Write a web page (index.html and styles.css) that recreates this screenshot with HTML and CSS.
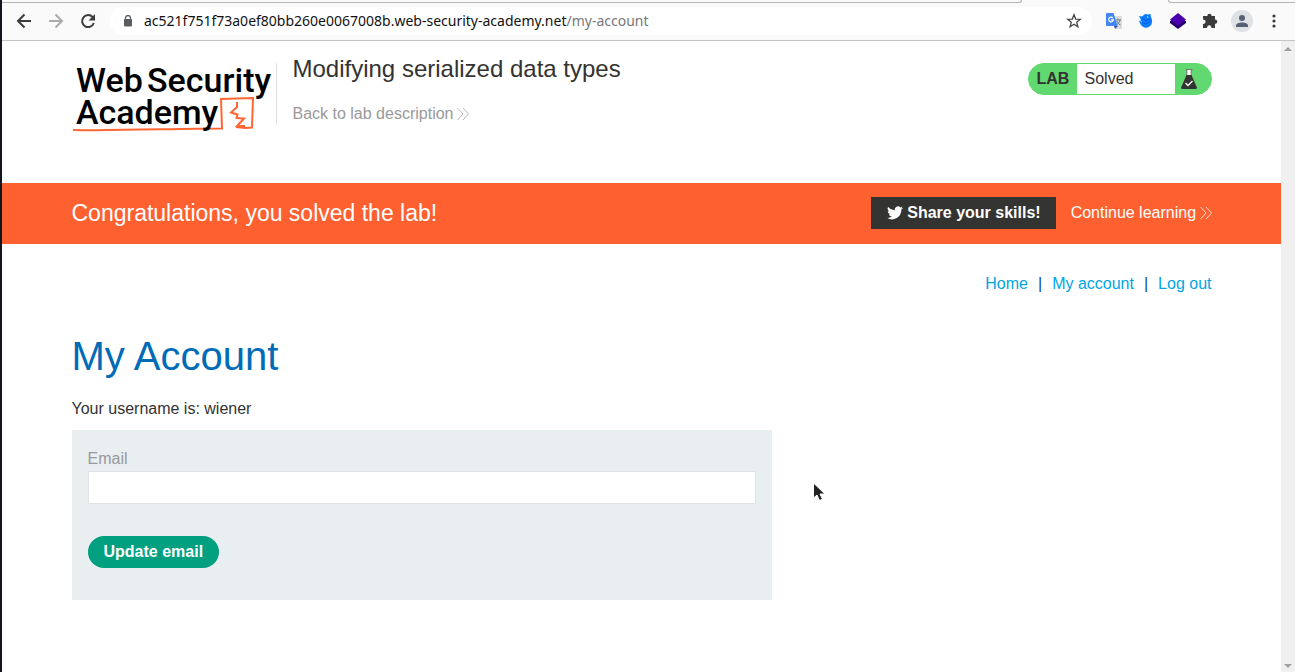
FILE: index.html
```html
<!DOCTYPE html>
<html lang="en">
<head>
<meta charset="utf-8">
<title>Modifying serialized data types</title>
<link rel="stylesheet" href="styles.css">
</head>
<body>
<div class="browser">
  <div class="tabs"><span class="tab-edge tab-edge-left"></span><span class="tab-edge tab-edge-right"></span></div>
  <div class="toolbar">
    <button class="tool" aria-label="Back"><svg width="16" height="16" viewBox="0 0 16 16" fill="none" stroke="#3c3c3c" stroke-width="2"><path d="M15 8H2M8.500 1.500L2 8l6.500 6.500"/></svg></button>
    <button class="tool" aria-label="Forward"><svg width="16" height="16" viewBox="0 0 16 16" fill="none" stroke="#ababab" stroke-width="2"><path d="M1 8h13M7.500 1.500L14 8l-6.500 6.500"/></svg></button>
    <button class="tool" aria-label="Reload"><svg width="16" height="16" viewBox="0 0 16 16"><path d="M12.700 4.200A6 6 0 1 0 13.800 10" fill="none" stroke="#3c3c3c" stroke-width="2"/><path d="M15 1v6.500H8.500z" fill="#3c3c3c"/></svg></button>
    <div class="address">
      <svg width="10" height="12" viewBox="0 0 10 12"><path d="M2.500 5V3a2.500 2.500 0 0 1 5 0v2" fill="none" stroke="#5a5e63" stroke-width="1.300"/><rect x="1" y="4" width="8" height="7.500" rx="1" fill="#5a5e63"/></svg>
      <span class="url">ac521f751f73a0ef80bb260e0067008b.web-security-academy.net<span class="path">/my-account</span></span>
      <button class="star" aria-label="Bookmark"><svg width="16" height="16" viewBox="0 0 16 16"><path d="M8 1.800l1.700 4.300 4.600.3-3.600 2.900 1.200 4.500L8 11.300l-3.900 2.500 1.200-4.500-3.600-2.900 4.600-.3z" fill="none" stroke="#444" stroke-width="1.300"/></svg></button>
    </div>
    <div class="extensions">
      <button class="tool" aria-label="Translate"><svg width="16" height="16" viewBox="0 0 16 16"><path d="M6 3h9a1 1 0 0 1 1 1v12H9z" fill="#dcdcdc"/><path d="M9.500 7h5.500M12 5.500V7M14 7c-.5 2.500-2 4-4 5M10.500 8c1 2 2 3 4 4" fill="none" stroke="#607d8b" stroke-width="1"/><path d="M8 13h4l-3 3z" fill="#3450c5"/><path d="M1 0h6.500L11.500 13H1a1 1 0 0 1-1-1V1a1 1 0 0 1 1-1z" fill="#4285f4"/><path d="M6.800 5A2.300 2.300 0 1 0 7.300 6.800H5" fill="none" stroke="#fff" stroke-width="1.200"/></svg></button>
      <button class="tool" aria-label="Proxy"><svg width="16" height="16" viewBox="0 0 16 16"><path d="M1 3l3 .5L7 1l3 .5L12.500 1l.5 3 1 3a6 6 0 0 1-12 3L1 8.500 3 7z" fill="#0a7cff"/><path d="M4 5.500l4 2 4-1.500M4.500 9c1.500 2.500 5.500 2.500 7-.5" fill="none" stroke="#0758d8"/><path d="M2.500 8l1.500 1M9.500 3l.5 2" stroke="#9bd0ff"/></svg></button>
      <button class="tool" aria-label="Layers"><svg width="16" height="16" viewBox="0 0 16 16"><path d="M0 8l8-3 8 3v2l-8 6-8-6z" fill="#21006b"/><path d="M8 0l8 6.500L8 13 0 6.500z" fill="#4b00b0"/></svg></button>
      <button class="tool" aria-label="Extensions"><svg width="16" height="16" viewBox="0 0 16 16"><path d="M1 3h4.500C4.800 0 10.200 0 9.500 3H13v3.600c3 0 3 4.300 0 4.300V15H9.500c0-3.600-4.500-3.600-4.500 0H1v-4c3.500 0 3.500-4.500 0-4.500z" fill="#3c3c3c"/></svg></button>
      <button class="avatar" aria-label="Profile"><svg width="14" height="14" viewBox="0 0 14 14" fill="#566174"><circle cx="7" cy="4" r="3"/><path d="M1 13v-1.500C1 7.500 13 7.500 13 11.500V13z"/></svg></button>
      <button class="tool" aria-label="Menu"><svg width="16" height="16" viewBox="0 0 16 16" fill="#3c3c3c"><circle cx="8" cy="3" r="1.600"/><circle cx="8" cy="8" r="1.600"/><circle cx="8" cy="13" r="1.600"/></svg></button>
    </div>
  </div>
  <div class="viewport">
    <div class="page">
      <header class="container lab-header">
        <a class="logo" href="#" aria-label="Web Security Academy">
          <svg width="204" height="76" viewBox="0 0 204 76">
            <path d="M1 73c50 1 100-1.500 149-1.500l-1-29.500 32-1-1 29.500-7 .5-9-1" fill="none" stroke="#ff6633" stroke-width="2"/>
            <path d="M165 45v5l-6 5.500 6.500 2-1 3.500 7.500.5-7 7.500h8" fill="none" stroke="#ff6633" stroke-width="2"/>
            <g class="logo-text"><text x="4" y="35">Web</text><text x="75" y="35">Security</text><text x="4" y="67">Academy</text></g>
          </svg>
        </a>
        <div class="title">
          <h2>Modifying serialized data types</h2>
          <a class="back" href="#">Back to lab description <svg width="12" height="12" viewBox="0 0 12 12" fill="none" stroke="currentColor" stroke-width=".7"><path d="M.5 0l5.500 6-5.500 6M6 0l5.500 6L6 12"/></svg></a>
        </div>
        <div class="status"><span class="lab">LAB</span><span class="solved">Solved</span><span class="flask"><svg width="16" height="20" viewBox="0 0 16 20"><path d="M6 1h4v7H6z" fill="#fff"/><path d="M4.500.5h7M5.800 1v6M10.200 1v6" stroke="#777"/><path d="M5.500 6h5l5.200 12a1.300 1.300 0 0 1-1 2H1.300a1.300 1.300 0 0 1-1-2z" fill="#333332"/><path d="M4.500 14l2.500 2.500 4.500-4.500" fill="none" stroke="#fff" stroke-width="1.300"/></svg></span></div>
      </header>
      <section class="banner">
        <div class="container banner-row">
          <h4>Congratulations, you solved the lab!</h4>
          <button class="share"><svg width="16" height="14" viewBox="0 0 24 20"><path d="M24 2.400a10 10 0 0 1-2.800.8A5 5 0 0 0 23.300.4a10 10 0 0 1-3.100 1.200 4.900 4.900 0 0 0-8.400 4.500A14 14 0 0 1 1.700 1a4.900 4.900 0 0 0 1.500 6.500A5 5 0 0 1 1 6.900a4.900 4.900 0 0 0 3.900 4.900 5 5 0 0 1-2.200.1 4.900 4.900 0 0 0 4.600 3.400A10 10 0 0 1 0 17.300 14 14 0 0 0 21.500 4.900 10 10 0 0 0 24 2.400z" fill="#fff"/></svg> Share your skills!</button>
          <a class="continue" href="#">Continue learning <svg width="12" height="12" viewBox="0 0 12 12" fill="none" stroke="currentColor" stroke-width=".8"><path d="M.5 0l5.500 6-5.500 6M6 0l5.500 6L6 12"/></svg></a>
        </div>
      </section>
      <main class="container">
        <nav><a href="#">Home</a><span>|</span><a href="#">My account</a><span>|</span><a href="#">Log out</a></nav>
        <h1>My Account</h1>
        <p>Your username is: wiener</p>
        <form>
          <label for="email">Email</label>
          <input id="email" type="email">
          <button type="button" class="update">Update email</button>
        </form>
      </main>
    </div>
    <div class="scrollbar"><span class="up"></span><span class="down"></span></div>
  </div>
</div>
<svg class="cursor" width="14" height="20" viewBox="0 0 14 20"><path d="M1.500 1v15l3.500-3 2.500 5.500 3-1.500L8 12h5z" fill="#222" stroke="#fff" stroke-width="1"/></svg>
</body>
</html>
```
FILE: styles.css
```css
* { box-sizing: border-box; }
body {
  margin: 0;
  font: 16px/20px "Liberation Sans", Arial, sans-serif;
  color: #333332;
  background: #fff;
}
h1, h2, h4, p { margin: 0; font-weight: 400; }
a { text-decoration: none; }
button { border: 0; padding: 0; background: none; font: inherit; }
svg { flex: none; }
.browser {
  display: flex;
  flex-direction: column;
  height: 100vh;
  border-left: 2px solid #14141f;
}
.tabs {
  display: flex;
  justify-content: space-between;
  height: 3px;
  background: #fafafa;
}
.tab-edge { border-bottom: 1px solid #b4b4b4; }
.tab-edge-left { flex: 1; border-right: 1px solid #b4b4b4; border-radius: 0 0 4px 0; margin-right: 146px; }
.tab-edge-right { width: 127px; border-left: 1px solid #b4b4b4; border-radius: 0 0 0 4px; }
.toolbar {
  display: flex;
  align-items: center;
  gap: 16px;
  height: 38px;
  padding: 0 13px 2px 14px;
  background: #fafafa;
  border-bottom: 1px solid #c4c4c4;
}
.tool, .star { display: flex; }
.address {
  display: flex;
  flex: 1;
  align-items: center;
  gap: 11px;
  height: 28px;
  margin: 0 -2px;
  padding: 0 10px 0 13px;
  border-radius: 14px;
  background: #fff;
}
.url { flex: 1; font: 14px/20px "Noto Sans", sans-serif; color: #111; }
.path { color: #777; }
.extensions { display: flex; align-items: center; gap: 16px; }
.avatar {
  display: grid;
  place-items: center;
  width: 22px;
  height: 22px;
  margin: 0 -3px;
  border-radius: 50%;
  background: #dee1e6;
}
.viewport { display: flex; flex: 1; min-height: 0; }
.page { flex: 1; min-width: 0; overflow: hidden; }
.scrollbar {
  display: flex;
  flex-direction: column;
  justify-content: space-between;
  align-items: center;
  width: 14px;
  padding: 6px 0 4px;
  background: #f0f0f0;
}
.up, .down { border: 4px solid transparent; }
.up { border-top: 0; border-bottom-color: #a0a0a0; }
.down { border-bottom: 0; border-top-color: #a0a0a0; }
.container { max-width: 1140px; margin: 0 auto; }
.lab-header { display: flex; align-items: flex-start; padding: 16px 0 50px; }
.logo { display: flex; width: 204px; }
.logo-text { font: 500 34px Roboto, sans-serif; }
.title {
  flex: 1;
  height: 62px;
  margin-top: 6px;
  padding-left: 16px;
  border-left: 1px solid #e0e0e0;
}
h2 { margin-top: -8px; font-size: 24px; line-height: 28px; }
.back { display: inline-block; margin-top: 21px; color: #999; }
.status {
  display: flex;
  width: 184px;
  height: 32px;
  margin-top: 6px;
  border: 1px solid #62d870;
  border-radius: 16px;
  background: #62d870;
  line-height: 30px;
}
.lab { width: 48px; padding-left: 8px; font-weight: 700; }
.solved { flex: 1; padding-left: 8px; background: #fff; }
.flask { display: flex; align-items: center; width: 36px; padding-left: 6px; }
.banner { background: #ff6030; color: #fff; }
.banner-row { display: flex; align-items: center; padding: 14px 0 15px; }
h4 { flex: 1; font-size: 23px; line-height: 28px; }
.share {
  display: flex;
  align-items: center;
  gap: 4px;
  height: 32px;
  padding: 0 15px 0 16px;
  background: #333332;
  color: #fff;
  font-weight: 700;
}
.continue { margin-left: 15px; color: #fff; }
.back svg, .continue svg { margin-left: -1px; vertical-align: -1px; }
nav { display: flex; justify-content: flex-end; gap: 10px; padding-top: 30px; color: #0b4a9e; }
nav a { color: #00a5e1; }
h1 { margin-top: 40px; font-size: 40px; line-height: 44px; color: #006bb6; }
p { margin-top: 21px; }
form {
  display: flex;
  flex-direction: column;
  align-items: flex-start;
  max-width: 700px;
  margin-top: 11px;
  padding: 19px 16px 32px;
  background: #e9eef1;
}
label { color: #999; }
input { width: 100%; height: 33px; margin-top: 2px; border: 1px solid #e0e4e5; background: #fff; font: inherit; padding: 0 8px; }
.update { height: 32px; margin-top: 32px; padding: 0 16px; border-radius: 16px; background: #00a080; color: #fff; font-weight: 700; }
.cursor { position: absolute; left: 812px; top: 482px; }
```
